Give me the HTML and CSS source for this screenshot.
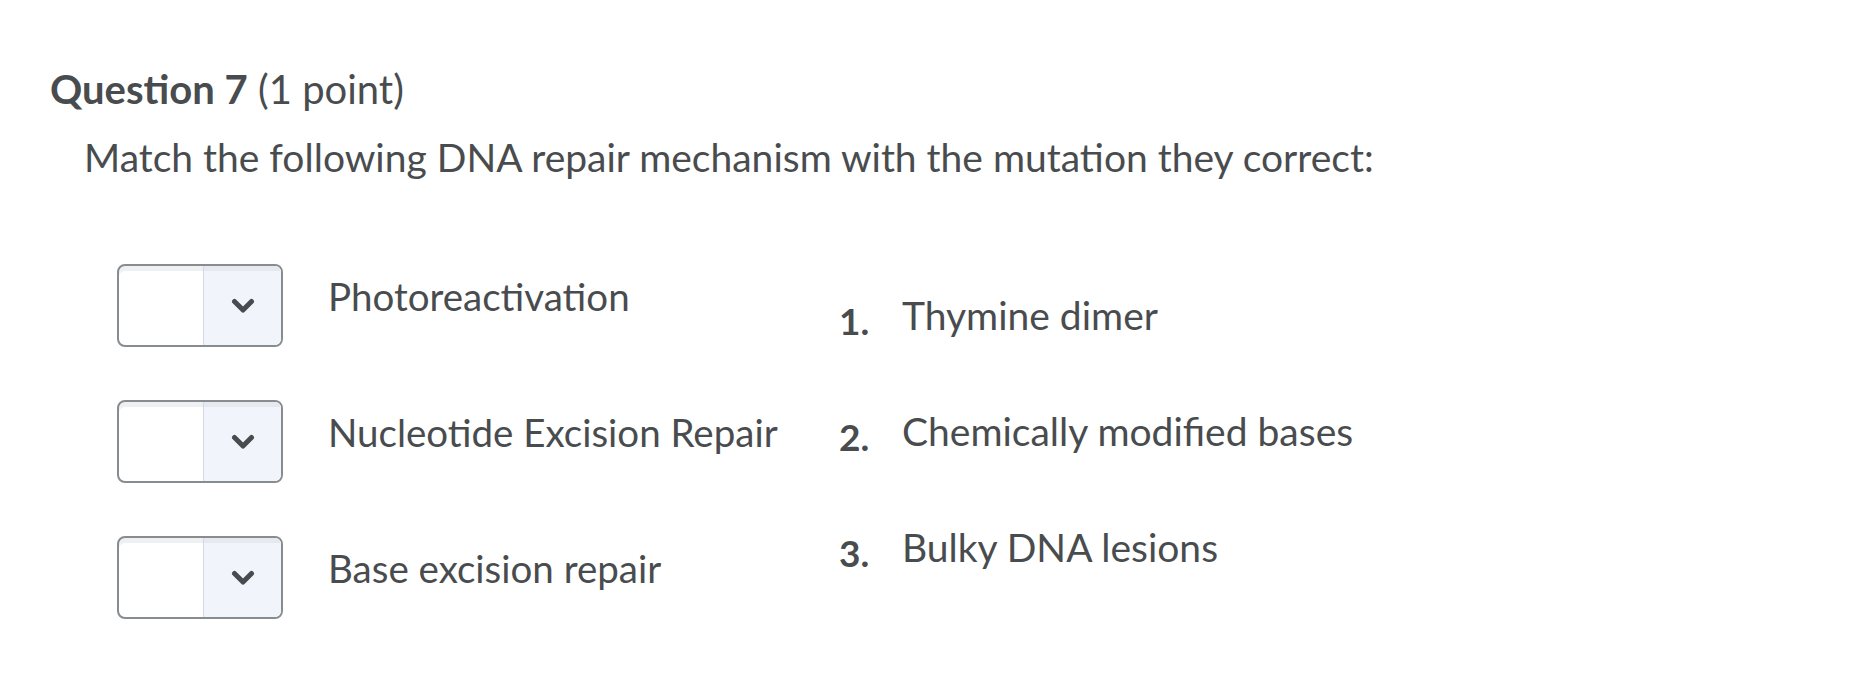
FILE: index.html
```
<!DOCTYPE html>
<html lang="en">
<head>
<meta charset="utf-8">
<title>Question 7</title>
<link rel="stylesheet" href="styles.css">
</head>
<body>
<section class="question">
  <h2 class="question-title"><strong>Question 7</strong> (1 point)</h2>
  <p class="question-text">Match the following DNA repair mechanism with the mutation they correct:</p>

  <div class="matching">
    <div class="match-left">
      <div class="match-row">
        <div class="select"><span class="select-value"></span><span class="select-arrow"><svg viewBox="0 0 24 16" width="24" height="16"><path d="M3.5 3.5l8.5 8.5 8.5-8.5" fill="none" stroke="#494c4e" stroke-width="5" stroke-linecap="round" stroke-linejoin="round"/></svg></span></div>
        <span class="match-label">Photoreactivation</span>
      </div>
      <div class="match-row">
        <div class="select"><span class="select-value"></span><span class="select-arrow"><svg viewBox="0 0 24 16" width="24" height="16"><path d="M3.5 3.5l8.5 8.5 8.5-8.5" fill="none" stroke="#494c4e" stroke-width="5" stroke-linecap="round" stroke-linejoin="round"/></svg></span></div>
        <span class="match-label">Nucleotide Excision Repair</span>
      </div>
      <div class="match-row">
        <div class="select"><span class="select-value"></span><span class="select-arrow"><svg viewBox="0 0 24 16" width="24" height="16"><path d="M3.5 3.5l8.5 8.5 8.5-8.5" fill="none" stroke="#494c4e" stroke-width="5" stroke-linecap="round" stroke-linejoin="round"/></svg></span></div>
        <span class="match-label">Base excision repair</span>
      </div>
    </div>
    <ol class="match-right">
      <li><span class="num">1.</span><span>Thymine dimer</span></li>
      <li><span class="num">2.</span><span>Chemically modified bases</span></li>
      <li><span class="num">3.</span><span>Bulky DNA lesions</span></li>
    </ol>
  </div>
</section>
</body>
</html>
```

FILE: styles.css
```
html, body {
  margin: 0;
  background: #ffffff;
}

body {
  font-family: Lato, "Open Sans", sans-serif;
  color: #494c4e;
}

.question {
  padding: 62px 0 0 50px;
}

.question-title {
  margin: 0;
  font-size: 40px;
  font-weight: 400;
  line-height: 54px;
}

.question-title strong {
  font-weight: 700;
}

.question-text {
  margin: 14px 0 0 34px;
  font-size: 39px;
  line-height: 54px;
}

.matching {
  display: flex;
  margin: 80px 0 0 67px;
}

.match-left {
  display: flex;
  flex-direction: column;
  gap: 53px;
}

.match-row {
  display: flex;
  align-items: center;
  gap: 45px;
  height: 83px;
}

.select {
  display: flex;
  width: 166px;
  height: 83px;
  box-sizing: border-box;
  border: 2px solid #868c8f;
  border-radius: 8px;
  overflow: hidden;
  box-shadow: inset 0 5px 0 #eef0f2;
}

.select-value {
  width: 84px;
  border-right: 1px solid #d3d9e3;
}

.select-arrow {
  flex: 1;
  display: flex;
  align-items: center;
  justify-content: center;
  background: #f1f5fb;
  box-shadow: inset 0 5px 0 #e6e9ee;
}

.match-label {
  font-size: 38.5px;
  line-height: 40px;
  margin-top: -20px;
  width: 511px;
}

.match-right {
  list-style: none;
  margin: 0;
  padding: 28px 0 0;
  display: flex;
  flex-direction: column;
}

.match-right li {
  display: flex;
  align-items: baseline;
  height: 116px;
  font-size: 39px;
  line-height: 46px;
}

.match-right .num {
  font-weight: 700;
  font-size: 37px;
  width: 63px;
  position: relative;
  top: 5px;
}
```
